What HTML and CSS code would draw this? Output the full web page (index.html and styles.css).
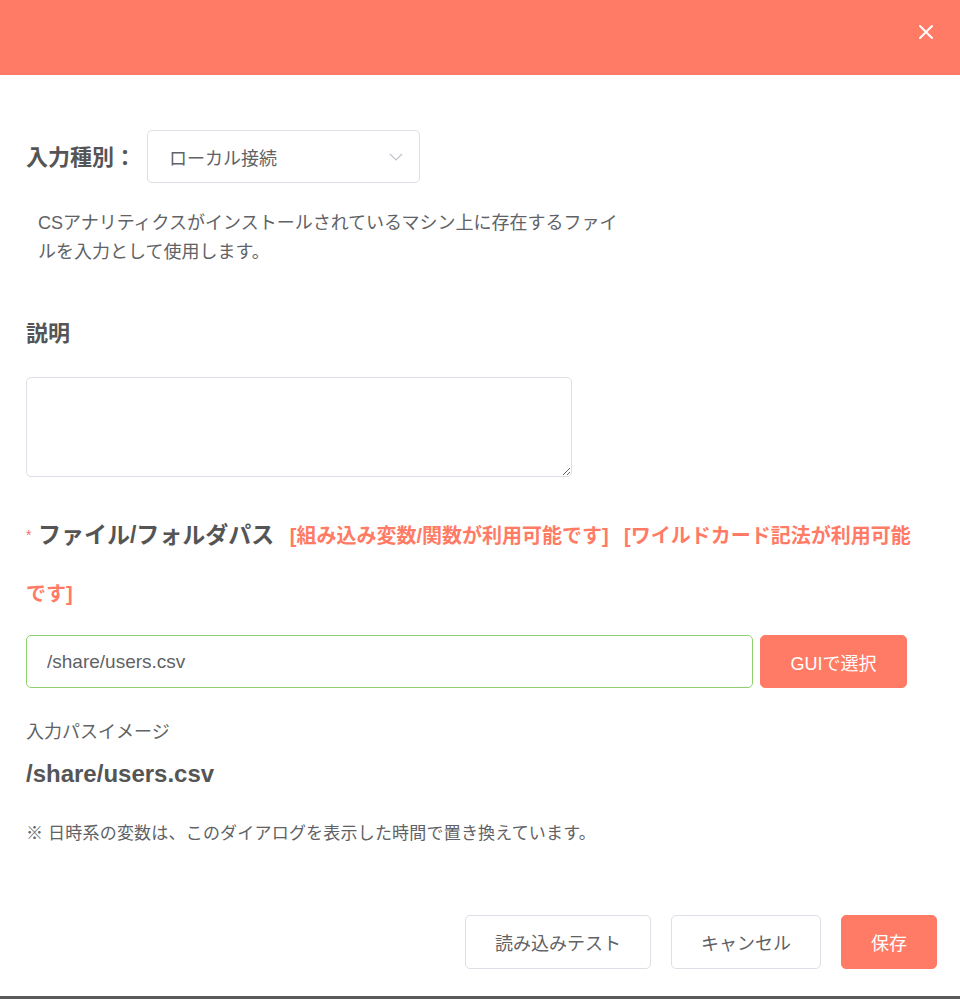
FILE: index.html
```html
<!DOCTYPE html>
<html lang="ja">
<head>
    <meta charset="UTF-8">
    <meta name="viewport" content="width=device-width, initial-scale=1.0">
    <title>入力設定</title>
    <link rel="stylesheet" href="styles.css">
</head>
<body>
    <div class="dialog">
        <div class="dialog-header">
            <button class="close-btn" aria-label="閉じる">
                <svg width="16" height="16" viewBox="0 0 16 16">
                    <path d="M2 2 L14 14 M14 2 L2 14" stroke="#fff" stroke-width="2" stroke-linecap="round"/>
                </svg>
            </button>
        </div>

        <div class="dialog-body">
            <div class="type-row">
                <span class="field-label">入力種別：</span>
                <div class="select">
                    <span>ローカル接続</span>
                    <svg class="select-arrow" width="14" height="8" viewBox="0 0 14 8">
                        <path d="M1 1 L7 7 L13 1" fill="none" stroke="#c0c4cc" stroke-width="1.2"/>
                    </svg>
                </div>
            </div>
            <p class="type-desc">CSアナリティクスがインストールされているマシン上に存在するファイルを入力として使用します。</p>

            <div class="field-label desc-label">説明</div>
            <textarea class="desc-input"></textarea>

            <div class="path-label">
                <span class="required">*</span>
                <span class="field-label">ファイル/フォルダパス</span>
                <span class="hint">[組み込み変数/関数が利用可能です]</span>
                <span class="hint">[ワイルドカード記法が利用可能です]</span>
            </div>

            <div class="path-row">
                <input class="path-input" type="text" value="/share/users.csv">
                <button class="btn btn-primary">GUIで選択</button>
            </div>

            <div class="preview-label">入力パスイメージ</div>
            <div class="preview-value">/share/users.csv</div>

            <p class="note">※ 日時系の変数は、このダイアログを表示した時間で置き換えています。</p>

            <div class="dialog-footer">
                <button class="btn">読み込みテスト</button>
                <button class="btn">キャンセル</button>
                <button class="btn btn-primary">保存</button>
            </div>
        </div>
    </div>
</body>
</html>
```

FILE: styles.css
```css
* {
    margin: 0;
    padding: 0;
    box-sizing: border-box;
    font-family: 'Liberation Sans', 'Noto Sans CJK JP', sans-serif;
}

body {
    background-color: #5b5b5b;
    color: #606266;
}

.dialog {
    width: 960px;
    height: 996px;
    background-color: #fff;
}

.dialog-header {
    height: 75px;
    background-color: #ff7b65;
    display: flex;
    justify-content: flex-end;
    padding: 24px 26px 0 0;
}

.close-btn {
    width: 16px;
    height: 16px;
    background: none;
    border: none;
    cursor: pointer;
}

.dialog-body {
    padding: 55px 23px 0 26px;
}

.field-label {
    font-size: 22px;
    font-weight: bold;
    color: #555;
}

.type-row {
    display: flex;
    align-items: center;
}

.type-row .field-label {
    width: 121px;
    margin-top: -3px;
}

.select {
    width: 273px;
    height: 53px;
    border: 1px solid #dcdfe6;
    border-radius: 5px;
    display: flex;
    align-items: center;
    justify-content: space-between;
    padding: 0 16px 0 21px;
    font-size: 18px;
    color: #606266;
}

.type-desc {
    width: 590px;
    margin: 26px 0 0 12px;
    font-size: 18px;
    line-height: 29px;
}

.desc-label {
    display: block;
    margin-top: 52px;
    line-height: 30px;
}

.desc-input {
    display: block;
    width: 546px;
    height: 100px;
    margin-top: 28px;
    border: 1px solid #dcdfe6;
    border-radius: 5px;
    padding: 8px 12px;
    font-size: 16px;
    color: #606266;
    outline: none;
}

.path-label {
    width: 890px;
    margin-top: 30px;
    line-height: 56px;
}

.path-label .field-label {
    font-size: 23px;
}

.required {
    color: #f56c6c;
    font-size: 14px;
    margin-right: 2px;
    vertical-align: 3px;
}

.hint {
    color: #ff7b65;
    font-size: 20px;
    font-weight: bold;
    margin-left: 11px;
}

.path-row {
    display: flex;
    gap: 7px;
    margin-top: 11px;
}

.path-input {
    width: 727px;
    height: 53px;
    border: 1px solid #8fd16e;
    border-radius: 5px;
    padding: 0 20px;
    font-size: 19px;
    color: #606266;
    outline: none;
}

.btn {
    height: 54px;
    padding: 0 29px;
    border: 1px solid #dcdfe6;
    border-radius: 5px;
    background-color: #fff;
    font-size: 18px;
    color: #606266;
    cursor: pointer;
}

.btn-primary {
    background-color: #ff7b65;
    border-color: #ff7b65;
    color: #fff;
}

.path-row .btn {
    width: 147px;
    height: 53px;
    padding: 0;
}

.preview-label {
    margin-top: 31px;
    font-size: 18px;
    line-height: 26px;
}

.preview-value {
    margin-top: 14px;
    font-size: 24px;
    font-weight: bold;
    line-height: 30px;
    color: #555;
}

.note {
    margin-top: 33px;
    font-size: 17px;
    line-height: 24px;
    letter-spacing: 0.2px;
}

.dialog-footer {
    display: flex;
    justify-content: flex-end;
    gap: 20px;
    margin-top: 69px;
}
```
